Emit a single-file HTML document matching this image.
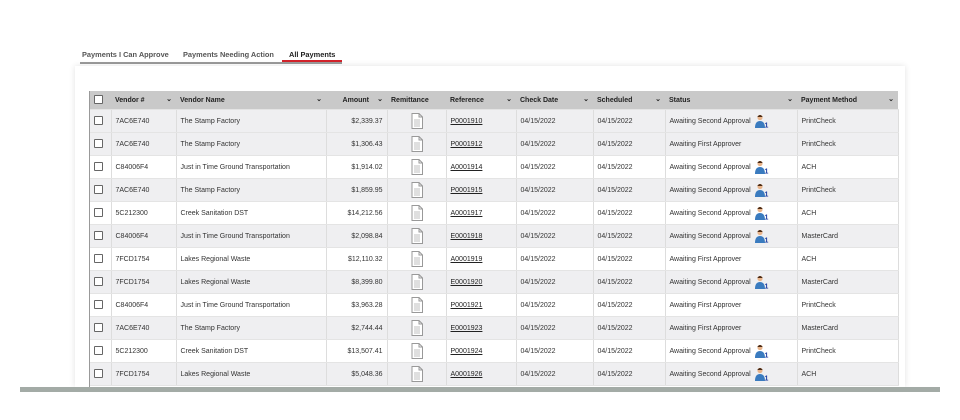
<!DOCTYPE html>
<html><head><style>
body{margin:0;width:960px;height:420px;background:#fff;font-family:"Liberation Sans",sans-serif;position:relative;overflow:hidden}
.tabs{position:absolute;left:80px;top:47px;width:262px;height:15px;border-bottom:2px solid #9a9a9a;font-size:7.4px;font-weight:bold;color:#555}
.tabs span{position:absolute;top:3px}
.red{position:absolute;left:282px;top:60px;width:60px;height:2px;background:#d2232a}
.card{position:absolute;left:75px;top:66px;width:830px;height:321px;background:#fff;box-shadow:0 0 6px rgba(0,0,0,.12)}
table{position:absolute;left:90px;top:91px;border-collapse:collapse;table-layout:fixed;font-size:7px;color:#333}
td,th{height:22px;border-right:1px solid #ddd;padding:0 4px;white-space:nowrap;overflow:hidden;border-bottom:1px solid #e4e4e4}
th{height:18px;background:#c9c9c9;text-align:left;font-weight:bold;color:#222;font-size:7px;border-right:none;position:relative}
th .c{position:absolute;right:4px;top:4px;font-size:7px}
tr.g td{background:#efeff1}
.cb{display:inline-block;width:7px;height:7px;border:1px solid #666;border-radius:1px;background:#fff}
.r{text-align:right}
a{color:#222;text-decoration:underline}
.doc{display:block;margin:0 auto;}
.bar{position:absolute;left:20px;top:387px;width:920px;height:5px;background:#a3aba6}
.lb{position:absolute;left:89px;top:91px;width:1px;height:296px;background:#999}
</style></head><body>
<div class="tabs"><span style="left:2px">Payments I Can Approve</span><span style="left:103px">Payments Needing Action</span><span style="left:209px;color:#222">All Payments</span></div>
<div class="red"></div>
<div class="card"></div>
<table>
<colgroup><col style="width:21px"><col style="width:65px"><col style="width:150px"><col style="width:61px"><col style="width:59px"><col style="width:70px"><col style="width:77px"><col style="width:72px"><col style="width:132px"><col style="width:101px"></colgroup>
<tr><th><span class="cb"></span></th><th>Vendor #<span class="c">&#8964;</span></th><th>Vendor Name<span class="c">&#8964;</span></th><th class="r" style="padding-right:18px">Amount<span class="c">&#8964;</span></th><th>Remittance</th><th>Reference<span class="c">&#8964;</span></th><th>Check Date<span class="c">&#8964;</span></th><th>Scheduled<span class="c">&#8964;</span></th><th>Status<span class="c">&#8964;</span></th><th>Payment Method<span class="c">&#8964;</span></th></tr>
<tbody id="b"></tbody>
</table>
<div class="lb"></div>
<div class="bar"></div>
<script>
var d=[["7AC6E740","The Stamp Factory","$2,339.37","P0001910","Awaiting Second Approval",1,"PrintCheck"],
["7AC6E740","The Stamp Factory","$1,306.43","P0001912","Awaiting First Approver",0,"PrintCheck"],
["C84006F4","Just in Time Ground Transportation","$1,914.02","A0001914","Awaiting Second Approval",1,"ACH"],
["7AC6E740","The Stamp Factory","$1,859.95","P0001915","Awaiting Second Approval",1,"PrintCheck"],
["5C212300","Creek Sanitation DST","$14,212.56","A0001917","Awaiting Second Approval",1,"ACH"],
["C84006F4","Just in Time Ground Transportation","$2,098.84","E0001918","Awaiting Second Approval",1,"MasterCard"],
["7FCD1754","Lakes Regional Waste","$12,110.32","A0001919","Awaiting First Approver",0,"ACH"],
["7FCD1754","Lakes Regional Waste","$8,399.80","E0001920","Awaiting Second Approval",1,"MasterCard"],
["C84006F4","Just in Time Ground Transportation","$3,963.28","P0001921","Awaiting First Approver",0,"PrintCheck"],
["7AC6E740","The Stamp Factory","$2,744.44","E0001923","Awaiting First Approver",0,"MasterCard"],
["5C212300","Creek Sanitation DST","$13,507.41","P0001924","Awaiting Second Approval",1,"PrintCheck"],
["7FCD1754","Lakes Regional Waste","$5,048.36","A0001926","Awaiting Second Approval",1,"ACH"]];
var doc='<svg class="doc" width="12" height="16" viewBox="0 0 12 16"><path d="M1 .5h7l3.5 3.5v11.5h-10.5z M8 .5v3.5h3.5" fill="#fff" stroke="#999" stroke-width="1"/><path d="M3 7h6M3 9h6M3 11h6M3 13h6" stroke="#aaa" stroke-width=".8"/></svg>';
var ic='<svg width="16" height="14" viewBox="0 0 16 14" style="vertical-align:middle;margin-left:3px"><circle cx="6" cy="3.5" r="2.6" fill="#e9b48a"/><path d="M3.3 3 Q6 -1 8.7 3" fill="#4a2a14"/><path d="M1 14 Q1 7 6 7 Q11 7 11 14z" fill="#3a7bbf"/><text x="10.5" y="13.5" font-size="7" font-weight="bold" fill="#1a3aa0" font-family="Liberation Sans">1</text></svg>';
var h='';d.forEach(function(r,i){h+='<tr class="'+(i%2==1||i==0?'g':'')+'"><td><span class="cb"></span></td><td>'+r[0]+'</td><td>'+r[1]+'</td><td class="r">'+r[2]+'</td><td>'+doc+'</td><td><a>'+r[3]+'</a></td><td>04/15/2022</td><td>04/15/2022</td><td>'+r[4]+(r[5]?ic:'')+'</td><td>'+r[6]+'</td></tr>';});
document.getElementById('b').innerHTML=h;
</script>
</body></html>
